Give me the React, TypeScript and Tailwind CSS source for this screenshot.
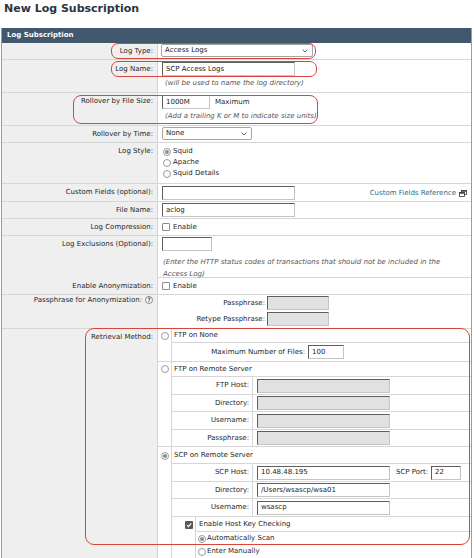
import React from "react";

const LBL = "bg-[#efefef] border-r border-[#d2d2d2] text-right pr-[4px] pt-[4px]";
const ROW = "grid grid-cols-[156px_1fr] border-b border-[#d6d6d6]";

function Radio({ checked = false }: { checked?: boolean }) {
  return (
    <span className="inline-flex h-[8px] w-[8px] shrink-0 items-center justify-center rounded-full border border-[#9a9a9a] bg-white">
      {checked && <span className="h-[4px] w-[4px] rounded-full bg-[#8c8c8c]" />}
    </span>
  );
}

function Check({ checked = false }: { checked?: boolean }) {
  if (checked) {
    return (
      <span className="inline-flex h-[8px] w-[8px] shrink-0 items-center justify-center rounded-[1px] bg-[#5a5a5a]">
        <svg width="6" height="6" viewBox="0 0 6 6">
          <path d="M1 3.1 L2.5 4.6 L5.1 1.3" stroke="white" strokeWidth="1.2" fill="none" />
        </svg>
      </span>
    );
  }
  return <span className="inline-block h-[8px] w-[8px] shrink-0 rounded-[1px] border border-[#8a8a8a] bg-white" />;
}

function Input({ className = "", value = "", disabled = false }: { className?: string; value?: string; disabled?: boolean }) {
  return (
    <div
      className={
        "flex h-[14px] items-center border border-t-[#5e5e5e] border-l-[#5e5e5e] border-r-[#c4c4c4] border-b-[#c4c4c4] pl-[3px] text-[#222] " +
        (disabled ? "bg-[#e1e1e1] " : "bg-white ") +
        className
      }
    >
      {value}
    </div>
  );
}

function Select({ value, className = "" }: { value: string; className?: string }) {
  return (
    <div className={"flex h-[13px] items-center justify-between rounded-[2px] border border-[#a6a6a6] bg-white pl-[3px] pr-[4px] text-[#222] " + className}>
      <span>{value}</span>
      <svg width="6" height="4" viewBox="0 0 6 4">
        <path d="M0.6 0.6 L3 3 L5.4 0.6" fill="none" stroke="#555" strokeWidth="0.9" />
      </svg>
    </div>
  );
}

function SubRow({ label, className, children }: { label: string; className: string; children: React.ReactNode }) {
  return (
    <div className={"grid grid-cols-[81px_1fr] " + className}>
      <div className="flex items-center justify-end border-r border-[#d6d6d6] pr-[3px]">{label}</div>
      <div className="flex items-center pl-[4px]">{children}</div>
    </div>
  );
}

export default function App() {
  return (
    <div className="relative h-[558px] w-[474px] overflow-hidden bg-white text-[7px] leading-[9px] text-[#262626] [font-family:'DejaVu_Sans',Verdana,sans-serif]">
      <div className="h-[28px] pl-[4px] pt-[2px] text-[11px] font-bold leading-[14px] text-[#2b3540]">New Log Subscription</div>

      <div className="ml-[1px] w-[471px] border-x border-[#9c9c9c]">
        <div className="flex h-[15px] items-center bg-[#42586f] pl-[5px] font-bold text-white">Log Subscription</div>

        <div className={ROW + " h-[17px]"}>
          <div className={LBL}>Log Type:</div>
          <div className="pl-[3px] pt-[1px]">
            <Select className="w-[152px]" value="Access Logs" />
          </div>
        </div>

        <div className={ROW + " h-[33px]"}>
          <div className={LBL + " pt-[5px]"}>Log Name:</div>
          <div className="pl-[4px] pt-[2px]">
            <Input className="w-[133px]" value="SCP Access Logs" />
            <div className="mt-[3px] pl-[3px] italic text-[#555]">(will be used to name the log directory)</div>
          </div>
        </div>

        <div className={ROW + " h-[33px]"}>
          <div className={LBL}>Rollover by File Size:</div>
          <div className="pl-[4px] pt-[2px]">
            <div className="flex items-center gap-[5px]">
              <Input className="w-[48px]" value="1000M" />
              <span>Maximum</span>
            </div>
            <div className="mt-[3px] pl-[3px] italic text-[#555]">(Add a trailing K or M to indicate size units)</div>
          </div>
        </div>

        <div className={ROW + " h-[17px]"}>
          <div className={LBL}>Rollover by Time:</div>
          <div className="pl-[4px] pt-[1px]">
            <Select className="w-[90px]" value="None" />
          </div>
        </div>

        <div className={ROW + " h-[41px]"}>
          <div className={LBL}>Log Style:</div>
          <div className="pl-[5px] pt-[3px]">
            <div className="flex h-[11px] items-center gap-[2px]"><Radio checked /> <span>Squid</span></div>
            <div className="flex h-[11px] items-center gap-[2px]"><Radio /> <span>Apache</span></div>
            <div className="flex h-[11px] items-center gap-[2px]"><Radio /> <span>Squid Details</span></div>
          </div>
        </div>

        <div className={ROW + " h-[18px]"}>
          <div className={LBL}>Custom Fields (optional):</div>
          <div className="flex items-start justify-between pl-[4px] pr-[4px] pt-[2px]">
            <Input className="w-[133px]" />
            <span className="mt-[3px] flex items-center gap-[3px] text-[#2f6a86]">
              Custom Fields Reference
              <svg width="8" height="7" viewBox="0 0 8 7">
                <rect x="2.5" y="0.5" width="5" height="4" fill="white" stroke="#333" strokeWidth="0.8" />
                <rect x="2.5" y="0.5" width="5" height="1.2" fill="#333" />
                <rect x="0.5" y="2.5" width="5" height="4" fill="white" stroke="#333" strokeWidth="0.8" />
                <rect x="0.5" y="2.5" width="5" height="1.2" fill="#333" />
              </svg>
            </span>
          </div>
        </div>

        <div className={ROW + " h-[17px]"}>
          <div className={LBL}>File Name:</div>
          <div className="pl-[4px] pt-[1px]">
            <Input className="w-[133px]" value="aclog" />
          </div>
        </div>

        <div className={ROW + " h-[17px]"}>
          <div className={LBL}>Log Compression:</div>
          <div className="flex items-center gap-[3px] pl-[4px]">
            <Check /> <span>Enable</span>
          </div>
        </div>

        <div className={ROW + " h-[42px]"}>
          <div className={LBL}>Log Exclusions (Optional):</div>
          <div className="pl-[4px] pt-[1px]">
            <Input className="w-[50px]" />
            <div className="mt-[5px] pl-[1px] italic leading-[12px] text-[#555]">
              (Enter the HTTP status codes of transactions that should not be included in the
              <br />
              Access Log)
            </div>
          </div>
        </div>

        <div className={ROW + " h-[17px]"}>
          <div className={LBL}>Enable Anonymization:</div>
          <div className="flex items-center gap-[3px] pl-[4px]">
            <Check /> <span>Enable</span>
          </div>
        </div>

        <div className={ROW + " h-[34px]"}>
          <div className="flex items-start justify-end gap-[3px] border-r border-[#d2d2d2] bg-[#efefef] pr-[4px] pt-[1px]">
            <span>Passphrase for Anonymization:</span>
            <span className="inline-flex h-[8px] w-[8px] items-center justify-center rounded-full border border-[#8a8a8a] bg-white text-[6px] font-bold leading-[6px] text-[#555]">?</span>
          </div>
          <div className="flex flex-col gap-[2px] pt-[1px]">
            <div className="flex items-center">
              <span className="w-[109px] pr-[2px] text-right">Passphrase:</span>
              <Input className="w-[62px]" disabled />
            </div>
            <div className="flex items-center">
              <span className="w-[109px] pr-[2px] text-right">Retype Passphrase:</span>
              <Input className="w-[62px]" disabled />
            </div>
          </div>
        </div>

        <div className="grid grid-cols-[156px_1fr]">
          <div className={LBL}>Retrieval Method:</div>
          <div>
            <div className="grid grid-cols-[14px_1fr] border-b border-[#d6d6d6]">
              <div className="border-r border-[#d6d6d6] pl-[3px] pt-[3px]">
                <Radio />
              </div>
              <div>
                <div className="flex h-[14px] items-center border-b border-[#d6d6d6] pl-[2px]">FTP on None</div>
                <div className="flex h-[18px] items-center">
                  <span className="w-[133px] text-right">Maximum Number of Files:</span>
                  <Input className="ml-[3px] h-[13px] w-[36px]" value="100" />
                </div>
              </div>
            </div>

            <div className="grid grid-cols-[14px_1fr] border-b border-[#d6d6d6]">
              <div className="border-r border-[#d6d6d6] pl-[3px] pt-[3px]">
                <Radio />
              </div>
              <div>
                <div className="flex h-[15px] items-center border-b border-[#d6d6d6] pl-[2px]">FTP on Remote Server</div>
                <SubRow label="FTP Host:" className="h-[18px] border-b border-[#d6d6d6]">
                  <Input className="h-[13px] w-[133px]" disabled />
                </SubRow>
                <SubRow label="Directory:" className="h-[17px] border-b border-[#d6d6d6]">
                  <Input className="h-[13px] w-[133px]" disabled />
                </SubRow>
                <SubRow label="Username:" className="h-[18px] border-b border-[#d6d6d6]">
                  <Input className="h-[13px] w-[133px]" disabled />
                </SubRow>
                <SubRow label="Passphrase:" className="h-[16px]">
                  <Input className="h-[13px] w-[133px]" disabled />
                </SubRow>
              </div>
            </div>

            <div className="grid grid-cols-[14px_1fr]">
              <div className="border-r border-[#d6d6d6] pl-[3px] pt-[5px]">
                <Radio checked />
              </div>
              <div>
                <div className="flex h-[17px] items-center border-b border-[#d6d6d6] pl-[2px]">SCP on Remote Server</div>
                <SubRow label="SCP Host:" className="h-[18px] border-b border-[#d6d6d6]">
                  <Input className="h-[13px] w-[133px]" value="10.48.48.195" />
                  <span className="ml-[6px]">SCP Port:</span>
                  <Input className="ml-[3px] h-[13px] w-[30px]" value="22" />
                </SubRow>
                <SubRow label="Directory:" className="h-[17px] border-b border-[#d6d6d6]">
                  <Input className="h-[13px] w-[133px]" value="/Users/wsascp/wsa01" />
                </SubRow>
                <SubRow label="Username:" className="h-[18px] border-b border-[#d6d6d6]">
                  <Input className="h-[13px] w-[133px]" value="wsascp" />
                </SubRow>
                <div className="grid h-[60px] grid-cols-[24px_1fr]">
                  <div className="border-r border-[#d6d6d6] pl-[13px] pt-[4px]">
                    <Check checked />
                  </div>
                  <div>
                    <div className="flex h-[15px] items-center border-b border-[#d6d6d6] pl-[3px]">Enable Host Key Checking</div>
                    <div className="flex h-[13px] items-center gap-[1px] pl-[2px]">
                      <Radio checked /> <span>Automatically Scan</span>
                    </div>
                    <div className="flex h-[13px] items-center gap-[1px] pl-[2px]">
                      <Radio /> <span>Enter Manually</span>
                    </div>
                  </div>
                </div>
              </div>
            </div>
          </div>
        </div>
      </div>

      <div className="pointer-events-none absolute left-[111px] top-[43px] h-[16px] w-[205px] rounded-[7px] border-[1.5px] border-[#d8453b]" />
      <div className="pointer-events-none absolute left-[111px] top-[61px] h-[16px] w-[206px] rounded-[7px] border-[1.5px] border-[#d8453b]" />
      <div className="pointer-events-none absolute left-[73px] top-[95px] h-[29px] w-[245px] rounded-[8px] border-[1.5px] border-[#d8453b]" />
      <div className="pointer-events-none absolute left-[85px] top-[328px] h-[217px] w-[385px] rounded-[9px] border-[1.5px] border-[#d8453b]" />
    </div>
  );
}
